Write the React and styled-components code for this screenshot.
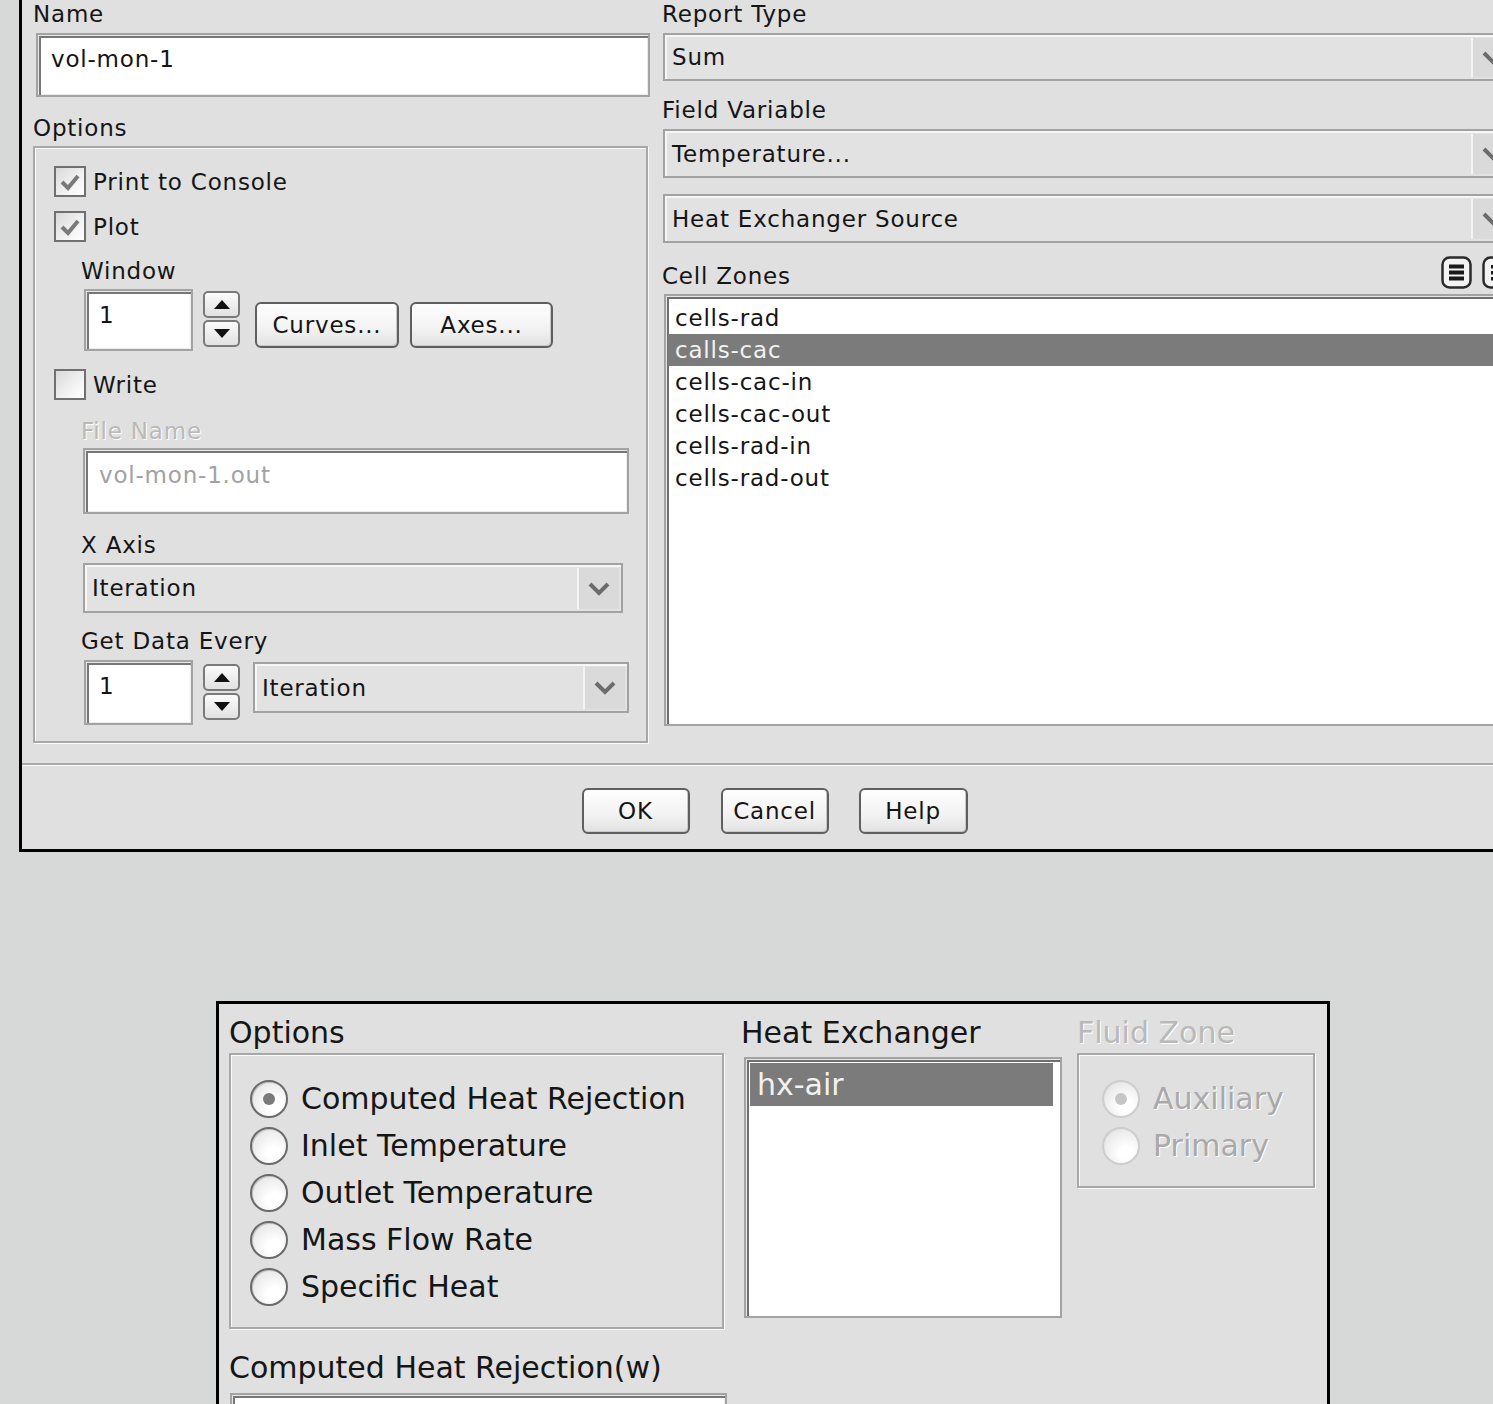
import React from "react";
import styled, { createGlobalStyle } from "styled-components";

const GlobalStyle = createGlobalStyle`
  * { box-sizing: border-box; }
  html, body { margin: 0; padding: 0; background: #d7d9d8; }
  body {
    width: 1493px;
    height: 1404px;
    overflow: hidden;
    font-family: "DejaVu Sans", Verdana, sans-serif;
    color: #151515;
  }
`;

const Page = styled.div`
  width: 1493px;
  height: 1404px;
  overflow: hidden;
  display: flex;
  flex-direction: column;
`;

const Dialog = styled.div`
  flex-shrink: 0;
  background: #e0e0e0;
  border: 3px solid #000;
  font-size: ${(p) => p.$font}px;
  letter-spacing: ${(p) => p.$spacing || 0}px;
  line-height: 1.22;
`;

const MonitorDialog = styled(Dialog)`
  border-top: none;
  width: 1511px;
  margin-left: 19px;
  height: 852px;
`;

const SourceDialog = styled(Dialog)`
  width: 1114px;
  margin-left: 216px;
  margin-top: 149px;
  height: 420px;
  padding: 11px 11px 0 10px;
`;

const Columns = styled.div`
  display: grid;
  grid-template-columns: 617px 1fr;
  column-gap: 12px;
  padding: 0 11px;
`;

const Column = styled.div`
  display: flex;
  flex-direction: column;
  align-items: flex-start;
`;

const Label = styled.div`
  height: 1.22em;
  margin-top: ${(p) => p.$mt || 0}px;
  white-space: nowrap;
  color: ${(p) => (p.$disabled ? "#b9b9b9" : "#151515")};
  text-shadow: ${(p) => (p.$disabled ? "1px 1px 0 #fff" : "none")};
`;

const Field = styled.div`
  width: ${(p) => p.$w}px;
  height: ${(p) => p.$h}px;
  margin-top: ${(p) => p.$mt || 0}px;
  margin-left: ${(p) => p.$ml || 0}px;
  flex-shrink: 0;
  border: 2px solid #a3a3a3;
  background: #fff;
  box-shadow: inset 1px 1px 0 #e6e6e6, inset 3px 3px 0 #777,
    inset -1px -1px 0 #ececec;
  padding: ${(p) => p.$pt || 9}px 0 0 ${(p) => p.$pl || 13}px;
  color: ${(p) => (p.$disabled ? "#a2a2a2" : "#151515")};
  white-space: nowrap;
`;

const Select = styled.div`
  display: flex;
  width: ${(p) => (p.$w ? `${p.$w}px` : "100%")};
  height: ${(p) => p.$h || 49}px;
  margin-top: ${(p) => p.$mt || 0}px;
  margin-left: ${(p) => p.$ml || 0}px;
  flex-shrink: 0;
  border: 2px solid #a2a2a2;
  background: #e2e2e2;
  box-shadow: inset 2px 2px 0 #f6f6f6;
`;

const SelectText = styled.div`
  flex: 1;
  display: flex;
  align-items: center;
  padding-left: 7px;
  white-space: nowrap;
`;

const SelectArrow = styled.div`
  width: 42px;
  margin: 3px 2px 2px 0;
  display: flex;
  align-items: center;
  justify-content: center;
  background: #dadada;
  border-left: 2px solid #f4f4f4;
`;

const Group = styled.div`
  width: ${(p) => (p.$w ? `${p.$w}px` : "100%")};
  height: ${(p) => (p.$h ? `${p.$h}px` : "auto")};
  margin-top: ${(p) => p.$mt || 0}px;
  border: 2px solid #a8a8a8;
  box-shadow: inset 1px 1px 0 #fafafa, 1px 1px 0 #fafafa;
  padding: ${(p) => p.$pad};
  display: flex;
  flex-direction: column;
  align-items: flex-start;
`;

const Indent = styled.div`
  margin-left: 27px;
  display: flex;
  flex-direction: column;
  align-items: flex-start;
`;

const CheckRow = styled.div`
  height: 45px;
  margin-top: ${(p) => p.$mt || 0}px;
  display: flex;
  align-items: center;
  gap: 7px;
  white-space: nowrap;
`;

const CheckBox = styled.div`
  width: 32px;
  height: 31px;
  border: 2px solid #707070;
  background: linear-gradient(135deg, #d9d9d9, #f6f6f6 70%, #fff);
  display: flex;
  align-items: center;
  justify-content: center;
`;

const SpinRow = styled.div`
  display: flex;
  align-items: flex-start;
  margin-top: ${(p) => p.$mt || 0}px;
`;

const Spinner = styled.div`
  display: flex;
  flex-direction: column;
  gap: 2px;
  margin: ${(p) => p.$mt || 2}px 0 0 10px;
`;

const SpinButton = styled.div`
  width: 37px;
  height: 27px;
  border: 2px solid #7a7a7a;
  border-radius: 5px;
  background: linear-gradient(#fbfbfb, #e1e1e1);
  display: flex;
  align-items: center;
  justify-content: center;
`;

const Triangle = styled.div`
  width: 0;
  height: 0;
  border-left: 8px solid transparent;
  border-right: 8px solid transparent;
  ${(p) =>
    p.$down ? "border-top: 9px solid #111;" : "border-bottom: 9px solid #111;"}
`;

const PushButton = styled.div`
  width: ${(p) => p.$w}px;
  height: 46px;
  margin-left: ${(p) => p.$ml || 0}px;
  margin-top: ${(p) => p.$mt || 0}px;
  border: 2px solid #5f5f5f;
  border-radius: 6px;
  background: linear-gradient(#fefefe, #f2f2f2 60%, #e2e2e2);
  box-shadow: inset -1px -1px 0 #c9c9c9;
  display: flex;
  align-items: center;
  justify-content: center;
  white-space: nowrap;
`;

const ListHeader = styled.div`
  width: 100%;
  height: 28px;
  margin-top: 19px;
  display: flex;
  align-items: center;
  justify-content: space-between;
`;

const IconGroup = styled.div`
  display: flex;
  gap: 10px;
  margin-right: 3px;
  margin-bottom: 8px;
`;

const ListBox = styled.div`
  width: ${(p) => (p.$w ? `${p.$w}px` : "100%")};
  height: ${(p) => p.$h}px;
  margin-top: ${(p) => p.$mt || 0}px;
  margin-left: ${(p) => p.$ml || 0}px;
  border: 2px solid #a3a3a3;
  background: #fff;
  box-shadow: inset 1px 1px 0 #e6e6e6, inset 3px 3px 0 #6f6f6f;
  padding: ${(p) => p.$pad};
`;

const ListItem = styled.div`
  height: ${(p) => p.$h}px;
  line-height: ${(p) => p.$h}px;
  padding-left: 7px;
  white-space: nowrap;
  background: ${(p) => (p.$selected ? "#7b7b7b" : "transparent")};
  color: ${(p) => (p.$selected ? "#f2f2f2" : "#151515")};
`;

const Separator = styled.div`
  margin-top: 20px;
  height: 3px;
  border-top: 2px solid #a9a9a9;
  border-bottom: 1px solid #fafafa;
`;

const Footer = styled.div`
  display: flex;
  justify-content: center;
  margin-top: 22px;
`;

const SourceGrid = styled.div`
  display: grid;
  grid-template-columns: 495px 321px 239px;
  column-gap: 17px;
  & > :nth-child(3) {
    margin-left: -2px;
  }
`;

const RadioRow = styled.div`
  height: 47px;
  display: flex;
  align-items: center;
  gap: 13px;
  white-space: nowrap;
  color: ${(p) => (p.$disabled ? "#a9a9a9" : "#151515")};
  text-shadow: ${(p) => (p.$disabled ? "1px 1px 0 #fff" : "none")};
`;

const RadioCircle = styled.div`
  width: 38px;
  height: 38px;
  border-radius: 50%;
  border: 2px solid ${(p) => (p.$disabled ? "#cdcdcd" : "#6a6a6a")};
  background: radial-gradient(circle at 65% 70%, #fff 20%, #e2e2e2 90%);
  box-shadow: inset 1px 1px 0 ${(p) => (p.$disabled ? "#e4e4e4" : "#c4c4c4")};
  display: flex;
  align-items: center;
  justify-content: center;
`;

const RadioDot = styled.div`
  width: 12px;
  height: 12px;
  border-radius: 50%;
  background: ${(p) => (p.$disabled ? "#c6c6c6" : "#7a7a7a")};
`;

const Chevron = () => (
  <svg width="22" height="14" viewBox="0 0 22 14">
    <polyline points="2,2 11,11 20,2" fill="none" stroke="#6c6c6c" strokeWidth="4" />
  </svg>
);

const Check = () => (
  <svg width="22" height="20" viewBox="0 0 22 20">
    <polyline points="3,10 9,16 19,4" fill="none" stroke="#7a7a7a" strokeWidth="4" />
  </svg>
);

const ListIcon = ({ dashed }) => (
  <svg width="31" height="33" viewBox="0 0 31 33">
    <rect x="1.5" y="1.5" width="28" height="30" rx="7" fill="#f3f3f3" stroke="#2a2a2a" strokeWidth="2.5" />
    {dashed ? (
      <g fill="#1a1a1a">
        <rect x="9" y="9" width="4" height="3.5" />
        <rect x="16" y="9" width="6" height="3.5" />
        <rect x="9" y="15" width="4" height="3.5" />
        <rect x="16" y="15" width="6" height="3.5" />
        <rect x="9" y="21" width="4" height="3.5" />
        <rect x="16" y="21" width="6" height="3.5" />
      </g>
    ) : (
      <g fill="#1a1a1a">
        <rect x="8" y="8.5" width="15" height="4" />
        <rect x="8" y="14.5" width="15" height="4" />
        <rect x="8" y="20.5" width="15" height="4" />
      </g>
    )}
  </svg>
);

const Spin = ({ mt }) => (
  <Spinner $mt={mt}>
    <SpinButton>
      <Triangle />
    </SpinButton>
    <SpinButton>
      <Triangle $down />
    </SpinButton>
  </Spinner>
);

const Dropdown = ({ text, ...rest }) => (
  <Select {...rest}>
    <SelectText>{text}</SelectText>
    <SelectArrow>
      <Chevron />
    </SelectArrow>
  </Select>
);

const Radio = ({ label, checked, disabled }) => (
  <RadioRow $disabled={disabled}>
    <RadioCircle $disabled={disabled}>{checked && <RadioDot $disabled={disabled} />}</RadioCircle>
    {label}
  </RadioRow>
);

const zones = ["cells-rad", "calls-cac", "cells-cac-in", "cells-cac-out", "cells-rad-in", "cells-rad-out"];

const options = [
  "Computed Heat Rejection",
  "Inlet Temperature",
  "Outlet Temperature",
  "Mass Flow Rate",
  "Specific Heat",
];

export default function App() {
  return (
    <Page>
      <GlobalStyle />
      <MonitorDialog $font={23} $spacing={0.8}>
        <Columns>
          <Column>
            <Label>Name</Label>
            <Field $w={614} $h={64} $mt={5} $ml={3} $pt={10} $pl={13}>
              vol-mon-1
            </Field>
            <Label $mt={17}>Options</Label>
            <Group $w={615} $mt={4} $pad="11px 0 16px 19px">
              <CheckRow>
                <CheckBox>
                  <Check />
                </CheckBox>
                Print to Console
              </CheckRow>
              <CheckRow>
                <CheckBox>
                  <Check />
                </CheckBox>
                Plot
              </CheckRow>
              <Indent>
                <Label $mt={8}>Window</Label>
                <SpinRow $mt={4}>
                  <Field $w={109} $h={62} $ml={3} $pt={10} $pl={13}>
                    1
                  </Field>
                  <Spin />
                  <PushButton $w={144} $ml={15} $mt={13}>
                    Curves...
                  </PushButton>
                  <PushButton $w={143} $ml={11} $mt={13}>
                    Axes...
                  </PushButton>
                </SpinRow>
              </Indent>
              <CheckRow $mt={11}>
                <CheckBox />
                Write
              </CheckRow>
              <Indent>
                <Label $mt={10} $disabled>
                  File Name
                </Label>
                <Field $w={546} $h={66} $mt={3} $ml={2} $pt={11} $pl={14} $disabled>
                  vol-mon-1.out
                </Field>
                <Label $mt={17}>X Axis</Label>
                <Dropdown text="Iteration" $w={540} $h={50} $mt={4} $ml={2} />
                <Label $mt={14}>Get Data Every</Label>
                <SpinRow $mt={5}>
                  <Field $w={109} $h={65} $ml={3} $pt={10} $pl={13}>
                    1
                  </Field>
                  <Spin mt={4} />
                  <Dropdown text="Iteration" $w={376} $h={51} $mt={2} $ml={13} />
                </SpinRow>
              </Indent>
            </Group>
          </Column>
          <Column>
            <Label>Report Type</Label>
            <Dropdown text="Sum" $h={48} $mt={5} $ml={1} />
            <Label $mt={15}>Field Variable</Label>
            <Dropdown text="Temperature..." $h={49} $mt={5} $ml={1} />
            <Dropdown text="Heat Exchanger Source" $h={49} $mt={16} $ml={1} />
            <ListHeader>
              <Label>Cell Zones</Label>
              <IconGroup>
                <ListIcon />
                <ListIcon dashed />
              </IconGroup>
            </ListHeader>
            <ListBox $h={432} $mt={4} $ml={2} $pad="6px 0 0 2px">
              {zones.map((z, i) => (
                <ListItem key={z} $h={32} $selected={i === 1}>
                  {z}
                </ListItem>
              ))}
            </ListBox>
          </Column>
        </Columns>
        <Separator />
        <Footer>
          <PushButton $w={108}>OK</PushButton>
          <PushButton $w={108} $ml={31}>
            Cancel
          </PushButton>
          <PushButton $w={109} $ml={30}>
            Help
          </PushButton>
        </Footer>
      </MonitorDialog>

      <SourceDialog $font={30}>
        <SourceGrid>
          <Column>
            <Label>Options</Label>
            <Group $w={495} $h={276} $mt={1} $pad="21px 0 0 19px">
              {options.map((o, i) => (
                <Radio key={o} label={o} checked={i === 0} />
              ))}
            </Group>
          </Column>
          <Column>
            <Label>Heat Exchanger</Label>
            <ListBox $w={318} $h={261} $mt={5} $ml={3} $pad="4px 7px 0 4px">
              <ListItem $h={43} $selected>
                hx-air
              </ListItem>
            </ListBox>
          </Column>
          <Column>
            <Label $disabled>Fluid Zone</Label>
            <Group $w={238} $h={135} $mt={1} $pad="21px 0 0 23px">
              <Radio label="Auxiliary" checked disabled />
              <Radio label="Primary" disabled />
            </Group>
          </Column>
        </SourceGrid>
        <Label $mt={21}>Computed Heat Rejection(w)</Label>
        <Field $w={497} $h={60} $mt={7} $ml={1} />
      </SourceDialog>
    </Page>
  );
}
